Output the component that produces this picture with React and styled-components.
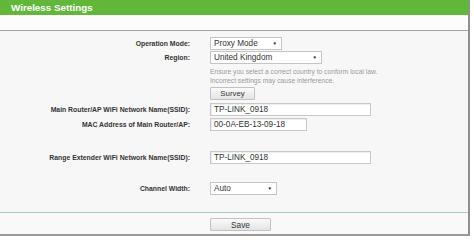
import React from 'react';
import styled, { createGlobalStyle } from 'styled-components';

const GlobalStyle = createGlobalStyle`
  html, body {
    margin: 0;
    padding: 0;
    background: #fff;
    font-family: "Liberation Sans", Arial, sans-serif;
  }
`;

const Panel = styled.div`
  width: 468px;
  border-right: 2px solid #8f8f8f;
  border-bottom: 2px solid #9a9a9a;
  background: #f7f7f7;
`;

const Header = styled.div`
  height: 15px;
  background: #62b73b;
  color: #fff;
  font-weight: bold;
  font-size: 9.8px;
  line-height: 15px;
  padding-left: 11px;
`;

const SubBand = styled.div`
  height: 15px;
  background: #fcfcfc;
  border-bottom: 1px solid #a2a2a2;
`;

const Body = styled.div`
  display: flex;
  flex-direction: column;
  padding-bottom: 17px;
  border-bottom: 1px solid #a6cdb9;
`;

const Row = styled.div`
  display: grid;
  grid-template-columns: 190px 1fr;
  column-gap: 20px;
  align-items: center;
  margin-top: ${(p) => p.$mt || 0}px;
  height: ${(p) => p.$h || 13}px;
`;

const Label = styled.div`
  text-align: right;
  font-weight: bold;
  font-size: 6.85px;
  color: #333;
  white-space: nowrap;
`;

const Control = styled.div`
  display: flex;
  align-items: center;
`;

const SelectBox = styled.div`
  box-sizing: border-box;
  width: ${(p) => p.$w}px;
  height: 13px;
  background: #fff;
  border: 1px solid #c4c4c4;
  display: flex;
  align-items: center;
  justify-content: space-between;
  padding: 0 4px 0 3px;
  font-size: 8.2px;
  color: #333;
`;

const Arrow = styled.span`
  font-size: 4.5px;
  color: #111;
`;

const TextInput = styled.div`
  box-sizing: border-box;
  width: ${(p) => p.$w}px;
  height: 13px;
  background: #fff;
  border: 1px solid #c8c8c8;
  box-shadow: inset 1px 1px 0 #eee;
  display: flex;
  align-items: center;
  padding-left: 3px;
  font-size: 8.2px;
  color: #333;
`;

const Note = styled.div`
  font-size: 6.7px;
  line-height: 9px;
  color: #9a9a9a;
  white-space: nowrap;
`;

const Button = styled.button`
  box-sizing: border-box;
  width: ${(p) => p.$w}px;
  height: 13px;
  padding: 0;
  border: 1px solid #c2c2c2;
  border-radius: 1px;
  background: linear-gradient(#fafafa, #e4e4e4);
  font-family: "Liberation Sans", Arial, sans-serif;
  font-weight: normal;
  font-size: ${(p) => p.$fs}px;
  color: #333;
`;

const Footer = styled.div`
  display: grid;
  grid-template-columns: 190px 1fr;
  column-gap: 20px;
  padding: 5px 0 3px;
  background: #f9f9f9;
`;

function Select({ w, children }) {
  return (
    <SelectBox $w={w}>
      <span>{children}</span>
      <Arrow>▼</Arrow>
    </SelectBox>
  );
}

export default function App() {
  return (
    <>
      <GlobalStyle />
      <Panel>
        <Header>Wireless Settings</Header>
        <SubBand />
        <Body>
          <Row $mt={6}>
            <Label>Operation Mode:</Label>
            <Control><Select w={72}>Proxy Mode</Select></Control>
          </Row>
          <Row $mt={1}>
            <Label>Region:</Label>
            <Control><Select w={112}>United Kingdom</Select></Control>
          </Row>
          <Row $mt={3} $h={18}>
            <div />
            <Note>
              Ensure you select a correct country to conform local law.
              <br />
              Incorrect settings may cause interference.
            </Note>
          </Row>
          <Row $mt={2}>
            <div />
            <Control><Button $w={45} $fs={7.8}>Survey</Button></Control>
          </Row>
          <Row $mt={3}>
            <Label>Main Router/AP WiFi Network Name(SSID):</Label>
            <Control><TextInput $w={161}>TP-LINK_0918</TextInput></Control>
          </Row>
          <Row $mt={2}>
            <Label>MAC Address of Main Router/AP:</Label>
            <Control><TextInput $w={97}>00-0A-EB-13-09-18</TextInput></Control>
          </Row>
          <Row $mt={20}>
            <Label>Range Extender WiFi Network Name(SSID):</Label>
            <Control><TextInput $w={161}>TP-LINK_0918</TextInput></Control>
          </Row>
          <Row $mt={18}>
            <Label>Channel Width:</Label>
            <Control><Select w={67}>Auto</Select></Control>
          </Row>
        </Body>
        <Footer>
          <div />
          <Control><Button $w={61} $fs={8.3}>Save</Button></Control>
        </Footer>
      </Panel>
    </>
  );
}
